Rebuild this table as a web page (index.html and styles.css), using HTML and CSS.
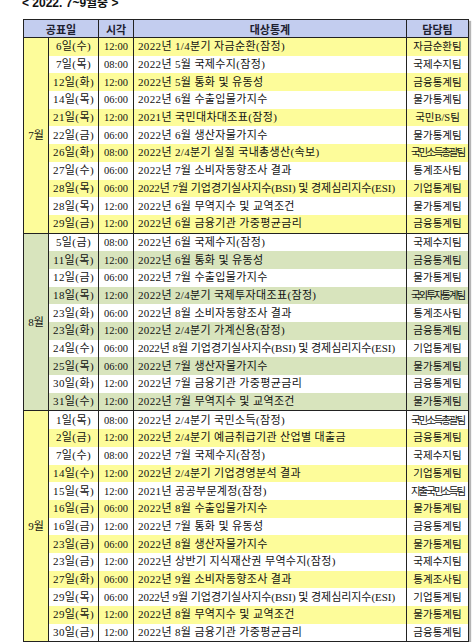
FILE: index.html
```html
<!DOCTYPE html>
<html lang="ko">
<head>
<meta charset="utf-8">
<link rel="stylesheet" href="styles.css">
</head>
<body>
<div class="title">&lt; 2022. 7~9월중 &gt;</div>
<table class="sched">
  <colgroup>
    <col class="c-mon"><col class="c-day"><col class="c-time"><col class="c-stat"><col class="c-team">
  </colgroup>
  <thead>
    <tr><th colspan="2">공표일</th><th>시각</th><th>대상통계</th><th>담당팀</th></tr>
  </thead>
  <tbody class="sec">
    <tr class="y"><td rowspan="11" class="mon y">7월</td><td class="dt">6일(수)</td><td>12:00</td><td class="st">2022년 1/4분기 자금순환(잠정)</td><td>자금순환팀</td></tr>
    <tr class="w"><td class="dt">7일(목)</td><td>08:00</td><td class="st">2022년 5월 국제수지(잠정)</td><td>국제수지팀</td></tr>
    <tr class="y"><td class="dt">12일(화)</td><td>12:00</td><td class="st">2022년 5월 통화 및 유동성</td><td>금융통계팀</td></tr>
    <tr class="w"><td class="dt">14일(목)</td><td>06:00</td><td class="st">2022년 6월 수출입물가지수</td><td>물가통계팀</td></tr>
    <tr class="y"><td class="dt">21일(목)</td><td>12:00</td><td class="st">2021년 국민대차대조표(잠정)</td><td>국민B/S팀</td></tr>
    <tr class="w"><td class="dt">22일(금)</td><td>06:00</td><td class="st">2022년 6월 생산자물가지수</td><td>물가통계팀</td></tr>
    <tr class="y"><td class="dt">26일(화)</td><td>08:00</td><td class="st">2022년 2/4분기 실질 국내총생산(속보)</td><td class="nar">국민소득총괄팀</td></tr>
    <tr class="w"><td class="dt">27일(수)</td><td>06:00</td><td class="st">2022년 7월 소비자동향조사 결과</td><td>통계조사팀</td></tr>
    <tr class="y"><td class="dt">28일(목)</td><td>06:00</td><td class="st lng">2022년 7월 기업경기실사지수(BSI) 및 경제심리지수(ESI)</td><td>기업통계팀</td></tr>
    <tr class="w"><td class="dt">28일(목)</td><td>12:00</td><td class="st">2022년 6월 무역지수 및 교역조건</td><td>물가통계팀</td></tr>
    <tr class="y"><td class="dt">29일(금)</td><td>12:00</td><td class="st">2022년 6월 금융기관 가중평균금리</td><td>금융통계팀</td></tr>
  </tbody>
  <tbody class="sec">
    <tr class="w"><td rowspan="10" class="mon g">8월</td><td class="dt">5일(금)</td><td>08:00</td><td class="st">2022년 6월 국제수지(잠정)</td><td>국제수지팀</td></tr>
    <tr class="g"><td class="dt">11일(목)</td><td>12:00</td><td class="st">2022년 6월 통화 및 유동성</td><td>금융통계팀</td></tr>
    <tr class="w"><td class="dt">12일(금)</td><td>06:00</td><td class="st">2022년 7월 수출입물가지수</td><td>물가통계팀</td></tr>
    <tr class="g"><td class="dt">18일(목)</td><td>12:00</td><td class="st">2022년 2/4분기 국제투자대조표(잠정)</td><td class="nar">국외투자통계팀</td></tr>
    <tr class="w"><td class="dt">23일(화)</td><td>06:00</td><td class="st">2022년 8월 소비자동향조사 결과</td><td>통계조사팀</td></tr>
    <tr class="g"><td class="dt">23일(화)</td><td>12:00</td><td class="st">2022년 2/4분기 가계신용(잠정)</td><td>금융통계팀</td></tr>
    <tr class="w"><td class="dt">24일(수)</td><td>06:00</td><td class="st lng">2022년 8월 기업경기실사지수(BSI) 및 경제심리지수(ESI)</td><td>기업통계팀</td></tr>
    <tr class="g"><td class="dt">25일(목)</td><td>06:00</td><td class="st">2022년 7월 생산자물가지수</td><td>물가통계팀</td></tr>
    <tr class="w"><td class="dt">30일(화)</td><td>12:00</td><td class="st">2022년 7월 금융기관 가중평균금리</td><td>금융통계팀</td></tr>
    <tr class="g"><td class="dt">31일(수)</td><td>12:00</td><td class="st">2022년 7월 무역지수 및 교역조건</td><td>물가통계팀</td></tr>
  </tbody>
  <tbody class="sec">
    <tr class="w"><td rowspan="13" class="mon y">9월</td><td class="dt">1일(목)</td><td>08:00</td><td class="st">2022년 2/4분기 국민소득(잠정)</td><td class="nar">국민소득총괄팀</td></tr>
    <tr class="y"><td class="dt">2일(금)</td><td>12:00</td><td class="st">2022년 2/4분기 예금취급기관 산업별 대출금</td><td>금융통계팀</td></tr>
    <tr class="w"><td class="dt">7일(수)</td><td>08:00</td><td class="st">2022년 7월 국제수지(잠정)</td><td>국제수지팀</td></tr>
    <tr class="y"><td class="dt">14일(수)</td><td>12:00</td><td class="st">2022년 2/4분기 기업경영분석 결과</td><td>기업통계팀</td></tr>
    <tr class="w"><td class="dt">15일(목)</td><td>12:00</td><td class="st">2021년 공공부문계정(잠정)</td><td class="nar">지출국민소득팀</td></tr>
    <tr class="y"><td class="dt">16일(금)</td><td>06:00</td><td class="st">2022년 8월 수출입물가지수</td><td>물가통계팀</td></tr>
    <tr class="w"><td class="dt">16일(금)</td><td>12:00</td><td class="st">2022년 7월 통화 및 유동성</td><td>금융통계팀</td></tr>
    <tr class="y"><td class="dt">23일(금)</td><td>06:00</td><td class="st">2022년 8월 생산자물가지수</td><td>물가통계팀</td></tr>
    <tr class="w"><td class="dt">23일(금)</td><td>12:00</td><td class="st">2022년 상반기 지식재산권 무역수지(잠정)</td><td>국제수지팀</td></tr>
    <tr class="y"><td class="dt">27일(화)</td><td>06:00</td><td class="st">2022년 9월 소비자동향조사 결과</td><td>통계조사팀</td></tr>
    <tr class="w"><td class="dt">29일(목)</td><td>06:00</td><td class="st lng">2022년 9월 기업경기실사지수(BSI) 및 경제심리지수(ESI)</td><td>기업통계팀</td></tr>
    <tr class="y"><td class="dt">29일(목)</td><td>12:00</td><td class="st">2022년 8월 무역지수 및 교역조건</td><td>물가통계팀</td></tr>
    <tr class="w"><td class="dt">30일(금)</td><td>12:00</td><td class="st">2022년 8월 금융기관 가중평균금리</td><td>금융통계팀</td></tr>
  </tbody>
</table>
</body>
</html>
```

FILE: styles.css
```css
html, body {
  margin: 0;
  padding: 0;
  background: #ffffff;
}
body {
  font-family: "Liberation Serif", "Noto Sans CJK KR", serif;
  color: #111;
  overflow: hidden;
}
.title {
  margin: -4px 0 9px 22px;
  font-family: "Liberation Sans", "Noto Sans CJK KR", sans-serif;
  font-weight: bold;
  font-size: 12px;
  line-height: 14px;
  color: #111;
}
.sched {
  margin-left: 23px;
  width: 445px;
  table-layout: fixed;
  border-collapse: collapse;
  border: 1px solid #222;
  font-size: 10.5px;
  box-shadow: 2px 2px 1px #b5b5b5;
}
.c-mon { width: 25px; }
.c-day { width: 50px; }
.c-time { width: 35px; }
.c-stat { width: 273px; }
.c-team { width: 62px; }
.sched th {
  background: #c3cdef;
  height: 17px;
  padding: 0;
  font-family: "Noto Sans CJK KR", sans-serif;
  font-weight: bold;
  font-size: 11px;
  color: #1d2030;
  border: 1px solid #222;
  text-align: center;
}
.sched td {
  height: 17.7px;
  padding: 0;
  line-height: 13px;
  text-align: center;
  white-space: nowrap;
  overflow: hidden;
  border-left: 1px solid #222;
  border-right: 1px solid #222;
}
.sec {
  border-top: 1px solid #222;
}
.sched td.st {
  text-align: left;
  padding-left: 4px;
  font-size: 11px;
  letter-spacing: 0.35px;
}
.sched td.st.lng {
  letter-spacing: -0.05px;
}
.sched td.dt {
  font-size: 11px;
  letter-spacing: 0.4px;
}
.sched td.mon {
  padding: 0;
  font-size: 11px;
}
.sched td.nar {
  letter-spacing: -2.1px;
}
.y { background: #fdfc9a; }
.g { background: #d8e4bd; }
.w { background: #ffffff; }
```
